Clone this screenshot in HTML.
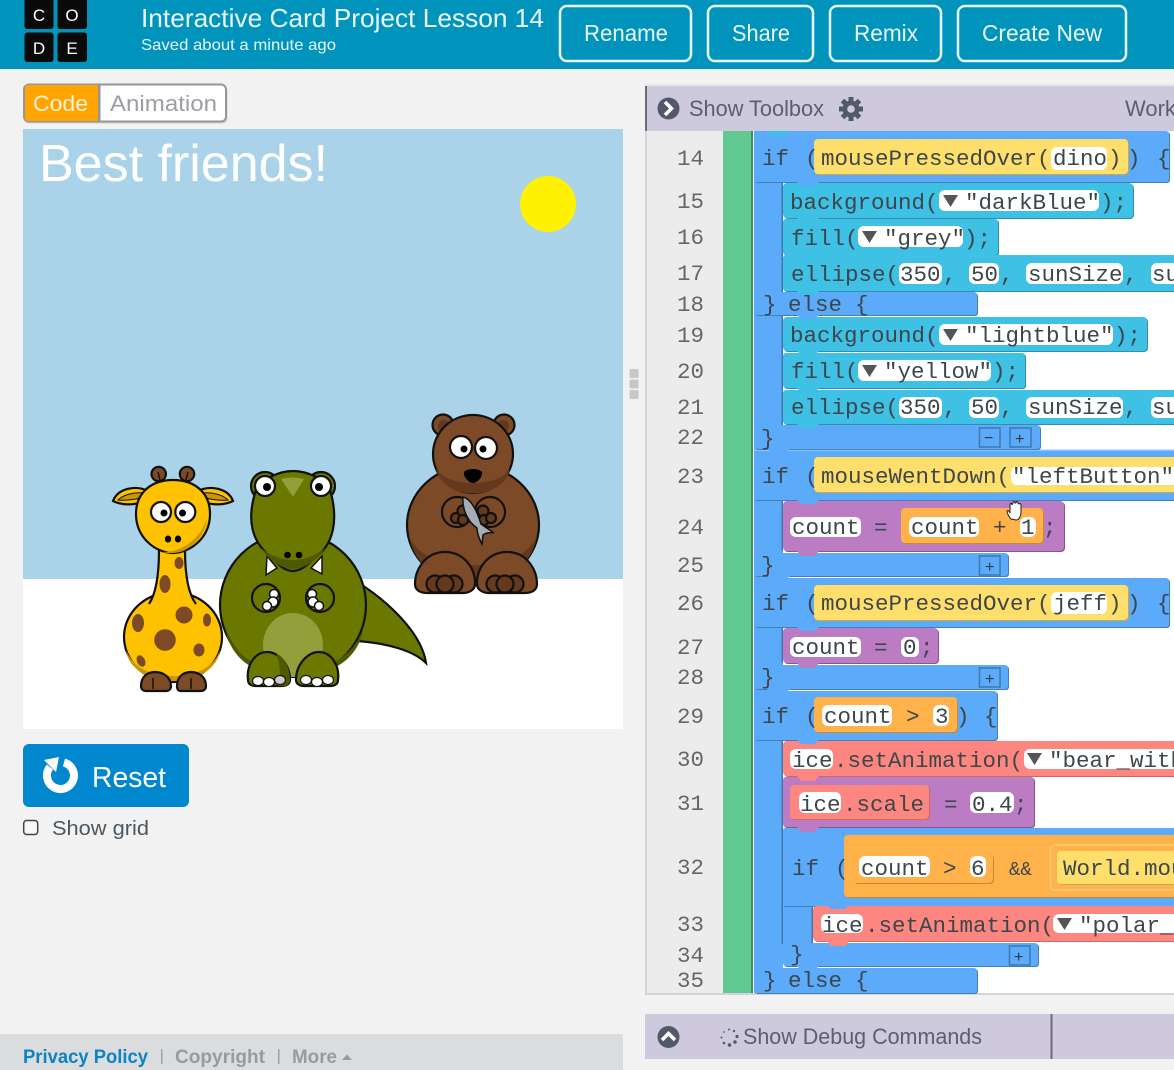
<!DOCTYPE html>
<html><head><meta charset="utf-8"><title>Interactive Card Project Lesson 14</title>
<style>
html,body{margin:0;padding:0;width:1174px;height:1070px;overflow:hidden;background:#f2f2f2}
svg{display:block}
text{font-family:"Liberation Sans",sans-serif}
.m text,text.m{font-family:"Liberation Mono",monospace;font-size:22.5px;fill:#3d474b}
.n text{font-family:"Liberation Mono",monospace;font-size:22.5px;fill:#666}
.b{fill:#5caafa;filter:drop-shadow(1.5px 1.5px 0 #467fb4)}
.c{fill:#3fc0e5;filter:drop-shadow(1.5px 1.5px 0 #338fb0)}
.p{fill:#bb7cc4;filter:drop-shadow(1.5px 1.5px 0 #84588c)}
.r{fill:#fd8680;filter:drop-shadow(1.5px 1.5px 0 #c86a66)}
.o{fill:#ffb24a;filter:drop-shadow(1.5px 1.5px 0 #c48a38)}
.y{fill:#ffdf6b;filter:drop-shadow(1.5px 1.5px 0 #c9a84e)}
.w{fill:#fff}
.k{stroke:#111;stroke-width:2.2}
.bx{fill:#5caafa;stroke:#3f78ad;stroke-width:1.5}
</style></head><body>
<svg width="1174" height="1070" viewBox="0 0 1174 1070" xmlns="http://www.w3.org/2000/svg">
<rect width="1174" height="1070" fill="#f2f2f2"/>
<!-- header -->
<rect width="1174" height="69" fill="#0094bc"/>
<g fill="#0a0a0a"><rect x="24.5" y="-3" width="29" height="32" rx="3"/><rect x="57.5" y="-3" width="29.5" height="32" rx="3"/><rect x="24.5" y="32.5" width="29" height="29.5" rx="3"/><rect x="57.5" y="32.500" width="29.500" height="29.500" rx="3"/></g>
<g fill="#fff" font-size="17" text-anchor="middle"><text x="39" y="21">C</text><text x="72" y="21">O</text><text x="39" y="54">D</text><text x="72" y="54">E</text></g>
<text x="141" y="27" font-size="26" fill="#e8f6fa" textLength="403" lengthAdjust="spacingAndGlyphs">Interactive Card Project Lesson 14</text>
<text x="141" y="50" font-size="16" fill="#e8f6fa" textLength="195" lengthAdjust="spacingAndGlyphs">Saved about a minute ago</text>
<g fill="none" stroke="#e8f6fa" stroke-width="2.5"><rect x="560" y="6" width="131" height="55" rx="7"/><rect x="708" y="6" width="105" height="55" rx="7"/><rect x="830" y="6" width="111" height="55" rx="7"/><rect x="958" y="6" width="168" height="55" rx="7"/></g>
<g fill="#e8f6fa" font-size="23"><text x="584" y="41" textLength="84" lengthAdjust="spacingAndGlyphs">Rename</text><text x="732" y="41" textLength="58" lengthAdjust="spacingAndGlyphs">Share</text><text x="854" y="41" textLength="64" lengthAdjust="spacingAndGlyphs">Remix</text><text x="982" y="41" textLength="120" lengthAdjust="spacingAndGlyphs">Create New</text></g>
<!-- toggle -->
<rect x="23.5" y="85.5" width="204" height="38" rx="5" fill="#b9bbbd" opacity=".6"/>
<rect x="24" y="84.5" width="202" height="37" rx="5" fill="#fff" stroke="#92979c" stroke-width="2"/>
<path d="M25 88a3 3 0 0 1 3-3h70v36H28a3 3 0 0 1-3-3z" fill="#ffa400"/>
<rect x="98" y="85" width="2.5" height="36" fill="#92979c"/>
<text x="33" y="111" font-size="22" fill="#fff2d8" textLength="55" lengthAdjust="spacingAndGlyphs">Code</text>
<text x="110" y="111" font-size="22" fill="#9a9ea3" textLength="107" lengthAdjust="spacingAndGlyphs">Animation</text>
<!-- stage -->
<rect x="23" y="129" width="600" height="450" fill="#aad3e9"/>
<rect x="23" y="579" width="600" height="150" fill="#fff"/>
<circle cx="548" cy="204" r="28" fill="#fff200"/>
<text x="39" y="181" font-size="52" fill="#fff" textLength="289" lengthAdjust="spacingAndGlyphs">Best friends!</text>

<!-- bear -->
<g class="k">
<circle cx="443" cy="425" r="10.5" fill="#7d4a28"/><circle cx="504" cy="425" r="10.5" fill="#7d4a28"/>
<circle cx="444" cy="426" r="6" fill="#5e3a22" stroke="none"/><circle cx="503" cy="426" r="6" fill="#5e3a22" stroke="none"/>
<ellipse cx="473" cy="525" rx="66" ry="60" fill="#7d4a28"/>
<path d="M409 535c8 24 40 30 64 30s56-6 64-30c-4 30-32 50-64 50s-60-20-64-50z" fill="#63391d" stroke="none"/>
<ellipse cx="473" cy="454" rx="40" ry="39" fill="#7d4a28"/>
<path d="M436 468c10 20 64 20 74 0c-6 34-68 34-74 0z" fill="#65391d" stroke="none"/>
<circle cx="461" cy="447" r="11" fill="#fff"/><circle cx="486" cy="448" r="11" fill="#fff"/>
<circle cx="457" cy="512" r="15" fill="none"/><circle cx="490" cy="512" r="15" fill="none"/>
<circle cx="456" cy="518" r="5" fill="#65391d"/><circle cx="463" cy="511" r="5.500" fill="#65391d"/><circle cx="463" cy="520" r="5" fill="#65391d"/><circle cx="483" cy="511" r="5.500" fill="#65391d"/><circle cx="484" cy="520" r="5" fill="#65391d"/><circle cx="491" cy="518" r="5" fill="#65391d"/>
<path d="M463 497c8 2 14 14 18 27l13 9c-5-1-8 0-11 2l-1 9c-3-5-5-12-5-16c-9-6-15-18-14-31z" fill="#a6adb6" stroke-width="1.500"/>
<path d="M445 552c20 0 31 18 30 32c0 6-6 9-12 9h-36c-7 0-12-3-12-9c0-14 10-32 30-32zM507 552c-20 0-31 18-30 32c0 6 6 9 12 9h36c7 0 12-3 12-9c0-14-10-32-30-32z" fill="#7d4a28"/>
<g fill="#65391d"><circle cx="435" cy="584" r="8.500"/><circle cx="454" cy="584" r="8.500"/><circle cx="445" cy="584" r="8.500"/><circle cx="495" cy="584" r="8.500"/><circle cx="515" cy="584" r="8.500"/><circle cx="505" cy="584" r="8.500"/></g>
</g>
<circle cx="464" cy="449" r="3.500" fill="#000"/><circle cx="483" cy="449" r="3.500" fill="#000"/>
<path d="M464 472c4-4 14-4 18 0c1 5-5 11-9 11s-10-6-9-11z" fill="#000"/>

<!-- dino -->
<g class="k">
<path d="M362 585c30 20 60 50 64 78c-12-12-38-20-70-22z" fill="#6a7800"/>
<ellipse cx="293" cy="605" rx="73" ry="72" fill="#6a7800"/>
<path d="M225 630c12 30 40 42 68 42s58-12 70-42c-6 32-34 46-70 46s-60-14-68-46z" fill="#4f5a00" stroke="none"/>
<ellipse cx="293" cy="645" rx="30" ry="32" fill="#92a03c" stroke="none"/>
<path d="M267 556l-1 19l11-7zM322 556l0 18l-11-6z" fill="#fff" stroke-width="1.500"/>
<circle cx="266" cy="598" r="14" fill="none"/><circle cx="320" cy="598" r="14" fill="none"/>
<g fill="#fff" stroke-width="1.500"><circle cx="274" cy="594" r="4.500"/><circle cx="273" cy="602" r="5"/><circle cx="267" cy="606" r="4.500"/><circle cx="312" cy="594" r="4.500"/><circle cx="313" cy="602" r="5"/><circle cx="319" cy="606" r="4.500"/></g>
<path d="M248 680c-2-16 8-28 19-28s23 12 23 28c0 4-4 6-8 6h-26c-5 0-8-2-8-6zM338 680c2-16-8-28-19-28s-23 12-23 28c0 4 4 6 8 6h26c5 0 8-2 8-6z" fill="#6a7800"/>
<path d="M276 653c8 4 14 14 14 27c0 3-2 5-5 6h-7c3-12 2-24-2-33z" fill="#4f5a00" stroke="none"/>
<g fill="#fff" stroke-width="1.200"><ellipse cx="258" cy="681" rx="5.500" ry="4.500"/><ellipse cx="269" cy="682" rx="5.500" ry="4.500"/><ellipse cx="280" cy="680" rx="5.500" ry="4.500" fill="#ccc"/><ellipse cx="306" cy="680" rx="5.500" ry="4.500"/><ellipse cx="317" cy="682" rx="5.500" ry="4.500"/><ellipse cx="328" cy="680" rx="5.500" ry="4.500"/></g>
<circle cx="265" cy="486" r="14" fill="#6a7800"/><circle cx="321" cy="486" r="14" fill="#6a7800"/>
<path d="M256 490c-10 30-4 52 14 66c8 8 14 15 23 15s16-8 24-15c16-12 22-36 13-66c-4-10-22-19-37-19s-32 9-37 19z" fill="#6a7800"/>
<path d="M261 548c10 8 22 12 32 12s22-4 32-12c-7 12-21 21-32 21s-25-9-32-21z" fill="#4f5a00" stroke="none"/>
<circle cx="265" cy="486" r="10" fill="#fff"/><circle cx="321" cy="486" r="10" fill="#fff"/>
</g>
<path d="M281 479c8-2 15-2 23 0l-11 18z" fill="#92a03c"/>
<circle cx="267" cy="487" r="4" fill="#000"/><circle cx="319" cy="487" r="4" fill="#000"/>
<circle cx="287.500" cy="555" r="3.300" fill="#000"/><circle cx="299" cy="555" r="3.300" fill="#000"/>

<!-- giraffe -->
<g class="k">
<ellipse cx="173" cy="637" rx="49" ry="45" fill="#ffc200"/>
<path d="M126 650c8 20 28 26 47 26s40-6 47-26c-2 18-22 31-47 31s-45-13-47-31z" fill="#c99700" stroke="none"/>
<path d="M149 606c8-12 10-36 10-56h26c0 20 2 44 11 56z" fill="#ffc200" stroke="none"/>
<path d="M159 550c0 20-2 42-10 54M185 550c0 20 2 42 11 54" fill="none"/>
<path d="M148 491c-12-6-30-3-35 10c12 6 29 3 36-2zM198 491c12-6 30-3 35 10c-12 6-29 3-36-2z" fill="#ffc200"/>
<path d="M143 493c-10-1-20 2-25 7c8 1 20-1 25-3zM203 493c10-1 20 2 25 7c-8 1-20-1-25-3z" fill="#c99700" stroke-width="1"/>
<circle cx="158.700" cy="474" r="7.200" fill="#7d4a26"/><circle cx="187" cy="474" r="7.200" fill="#7d4a26"/>
<path d="M136 514c0-22 16-34 37-34s37 12 37 34c0 24-20 39-37 39s-37-15-37-39z" fill="#ffc200"/>
<path d="M163 552c20 0 38-14 44-34c-1 18-18 35-34 35c-4 0-7 0-10-1z" fill="#c99700" stroke="none"/>
<circle cx="161" cy="512" r="10" fill="#fff"/><circle cx="185.300" cy="512" r="10" fill="#fff"/>
<path d="M160 480l-2-8M186 480l2-8" fill="none" stroke-width="1.500"/>
<g fill="#7d4a26" stroke="none"><ellipse cx="179" cy="563" rx="4.500" ry="6"/><ellipse cx="165" cy="584" rx="5.500" ry="9"/><circle cx="184" cy="615" r="8.500"/><ellipse cx="138" cy="623" rx="6" ry="9"/><ellipse cx="207" cy="620" rx="4" ry="6.500"/><circle cx="165" cy="640" r="10.800"/><ellipse cx="199" cy="650" rx="5.500" ry="6.500"/><ellipse cx="141" cy="661" rx="4" ry="6" transform="rotate(-25 141 661)"/></g>
<path d="M141 686c0-9 6-14 14-14s16 5 16 14c0 3-2 5-5 5h-20c-3 0-5-2-5-5zM177 686c0-9 6-14 14-14s15 5 15 14c0 3-2 5-5 5h-20c-3 0-4-2-4-5z" fill="#7d4a26"/>
<path d="M153 678v11M191 678v11" fill="none" stroke-width="1.500"/>
</g>
<circle cx="164" cy="513" r="3.500" fill="#000"/><circle cx="182.500" cy="513" r="3.500" fill="#000"/>
<ellipse cx="168" cy="539" rx="3.200" ry="3.500" fill="#000"/><ellipse cx="178" cy="539" rx="3.200" ry="3.500" fill="#000"/>

<!-- reset / grid -->
<rect x="23" y="744" width="166" height="63" rx="6" fill="#0087cd"/>
<path d="M64 762.500A13.500 13.500 0 1 1 50 767" fill="none" stroke="#fff" stroke-width="8"/>
<path d="M44 760l15-3-3 15z" fill="#fff"/>
<text x="92" y="787" font-size="29" fill="#fff" textLength="74" lengthAdjust="spacingAndGlyphs">Reset</text>
<rect x="23.700" y="820.500" width="14" height="14" rx="3" fill="#f7f7f7" stroke="#444" stroke-width="1.500"/>
<text x="52" y="835" font-size="20" fill="#4d575f" textLength="97" lengthAdjust="spacingAndGlyphs">Show grid</text>
<!-- footer -->
<rect y="1034" width="623" height="36" fill="#dbdcdd"/>
<text x="23" y="1063" font-size="19" font-weight="bold" fill="#0e83c1" textLength="125" lengthAdjust="spacingAndGlyphs">Privacy Policy</text>
<rect x="161" y="1049" width="1.500" height="15" fill="#9da3a8"/>
<text x="175" y="1063" font-size="19" font-weight="bold" fill="#949ca2" textLength="90" lengthAdjust="spacingAndGlyphs">Copyright</text>
<rect x="278" y="1049" width="1.500" height="15" fill="#9da3a8"/>
<text x="292" y="1063" font-size="19" font-weight="bold" fill="#949ca2" textLength="45" lengthAdjust="spacingAndGlyphs">More</text>
<path d="M342 1060l5-5.500 5 5.500z" fill="#949ca2"/>
<!-- resize -->
<g fill="#c5c7c9"><rect x="629.500" y="369" width="9" height="9" rx="1.500"/><rect x="629.500" y="379.500" width="9" height="9" rx="1.500"/><rect x="629.500" y="390" width="9" height="9" rx="1.500"/></g>

<!-- workspace -->
<rect x="645" y="84" width="529" height="2" fill="#e6e6e6"/>
<rect x="645" y="131" width="529" height="864" fill="#fff"/>
<rect x="645" y="131" width="2" height="864" fill="#d6d6d6"/>
<rect x="647" y="131" width="76" height="862" fill="#ececec"/>
<rect x="723" y="131" width="28" height="862" fill="#62c892"/>
<rect x="751" y="131" width="2" height="862" fill="#3f8f6a"/>
<rect x="645" y="993" width="529" height="2" fill="#d4d4d4"/>
<rect x="645" y="86" width="529" height="45" fill="#cfc9de"/>
<rect x="645" y="86" width="2" height="45" fill="#6c6c78"/>
<circle cx="668.500" cy="108.500" r="11" fill="#51596a"/>
<path d="M665 102l6.500 6.500-6.500 6.500" fill="none" stroke="#fff" stroke-width="3.500"/>
<text x="689" y="116" font-size="22" fill="#5a5f6e" textLength="135" lengthAdjust="spacingAndGlyphs">Show Toolbox</text>
<g transform="translate(851 109)" fill="#51596a"><circle r="8.500"/><g stroke="#51596a" stroke-width="5"><path d="M0-12V12M-12 0H12M-8.500-8.500L8.500 8.500M-8.500 8.500L8.500-8.500"/></g><circle r="3.800" fill="#cfc9de"/></g>
<text x="1125" y="116" font-size="22" fill="#5a5f6e">Workspace</text>

<!-- spines -->
<rect x="754" y="131" width="29" height="862" fill="#5caafa"/>
<rect x="783" y="905" width="30" height="40" fill="#5caafa"/>
<rect x="811.500" y="906" width="1.500" height="37" fill="#3f78ad"/>
<rect x="781.500" y="183" width="1.500" height="242" fill="#3f78ad"/>
<rect x="781.500" y="501" width="1.500" height="50" fill="#3f78ad"/>
<rect x="781.500" y="628" width="1.500" height="35" fill="#3f78ad"/>
<rect x="781.500" y="741" width="1.500" height="203" fill="#3f78ad"/>
<rect x="754" y="449.500" width="420" height="1.500" fill="#8ec5fc"/>

<!-- blocks -->
<rect class="b" x="754" y="131" width="415" height="51" rx="3"/>
<path d="M768 131h22l-4 5h-14z" fill="#3fc0e5"/>
<rect class="y" x="814" y="139" width="314" height="35" rx="4"/>
<rect class="c" x="783" y="183" width="350" height="35" rx="4"/>
<rect class="c" x="783" y="219" width="215" height="36" rx="3"/>
<rect class="c" x="783" y="255" width="395" height="36" rx="3"/>
<rect class="b" x="754" y="292" width="223" height="23" rx="3"/>
<rect class="c" x="783" y="317" width="364" height="34" rx="4"/>
<rect class="c" x="783" y="353" width="242" height="35" rx="3"/>
<rect class="c" x="783" y="390" width="395" height="34" rx="3"/>
<rect class="b" x="754" y="425" width="286" height="24" rx="3"/>
<rect class="b" x="754" y="451" width="425" height="49" rx="2"/>
<rect class="y" x="814" y="457" width="365" height="35" rx="4"/>
<rect class="p" x="783" y="501" width="281" height="50" rx="4"/>
<rect class="o" x="901" y="508" width="142" height="35" rx="4"/>
<rect class="b" x="754" y="553" width="254" height="23" rx="3"/>
<rect class="b" x="754" y="578" width="415" height="49" rx="3"/>
<rect class="y" x="814" y="585" width="314" height="35" rx="4"/>
<rect class="p" x="783" y="628" width="155" height="35" rx="4"/>
<rect class="b" x="754" y="665" width="254" height="24" rx="3"/>
<rect class="b" x="754" y="691" width="243" height="49" rx="3"/>
<rect class="o" x="814" y="697" width="143" height="35" rx="4"/>
<rect class="r" x="783" y="741" width="395" height="35" rx="4"/>
<rect class="p" x="783" y="777" width="251" height="50" rx="3"/>
<rect class="r" x="790" y="785" width="139" height="34" rx="4"/>
<rect class="b" x="783" y="828" width="395" height="78" rx="2"/>
<rect class="o" x="844" y="835" width="334" height="62" rx="4"/>
<rect class="o" x="853" y="854" width="140" height="29" rx="4"/>
<rect x="1050.500" y="845" width="130" height="45" rx="4" fill="#ffb24a" stroke="#ffc97d" stroke-width="1.500"/>
<rect class="y" x="1057" y="851" width="125" height="33" rx="4"/>
<rect class="r" x="813" y="906" width="365" height="35" rx="4"/>
<rect class="b" x="783" y="943" width="255" height="23" rx="3"/>
<rect class="b" x="754" y="968" width="223" height="25" rx="3"/>

<!-- connector tabs -->
<g fill="#3fc0e5"><path d="M797 218h22l-4 4h-14zM797 254h22l-4 4h-14zM797 291h22l-4 4h-14zM797 351h22l-4 4h-14zM797 388h22l-4 4h-14zM797 424h22l-4 4h-14z"/></g>
<g fill="#5caafa"><path d="M768 449h22l-4 4h-14zM768 576h22l-4 4h-14zM768 689h22l-4 4h-14zM797 182h22l-4 4h-14zM797 315h22l-4 4h-14zM797 500h22l-4 4h-14zM797 627h22l-4 4h-14zM797 740h22l-4 4h-14zM827 905h22l-4 4h-14zM797 966h22l-4 4h-14z"/></g>
<g fill="#bb7cc4"><path d="M797 551h22l-4 5h-14zM797 663h22l-4 5h-14zM797 827h22l-4 5h-14z"/></g>
<g fill="#fd8680"><path d="M797 776h22l-4 5h-14zM827 941h22l-4 5h-14z"/></g>

<!-- toggle boxes -->
<rect class="bx" x="979.500" y="428" width="20.500" height="19"/><rect class="bx" x="1010" y="428" width="21" height="19"/>
<rect class="bx" x="979.500" y="556" width="20.500" height="19"/>
<rect class="bx" x="979.500" y="668" width="20.500" height="19"/>
<rect class="bx" x="1009.500" y="946" width="20.500" height="19"/>
<g fill="#2f3a3f" font-size="16"><text x="984" y="443">−</text><text x="1015" y="444">+</text><text x="985" y="572">+</text><text x="985" y="684">+</text><text x="1014" y="962">+</text></g>

<!-- pills -->
<g class="w">
<rect x="1051" y="147" width="56" height="23" rx="6"/>
<rect x="939" y="190" width="160" height="21" rx="6"/>
<rect x="858" y="226" width="105" height="21" rx="6"/>
<rect x="899" y="263" width="43" height="21" rx="6"/><rect x="969" y="263" width="30" height="21" rx="6"/><rect x="1026" y="263" width="97" height="21" rx="6"/><rect x="1151" y="263" width="30" height="21" rx="6"/>
<rect x="939" y="324" width="174" height="21" rx="6"/>
<rect x="858" y="360" width="133" height="21" rx="6"/>
<rect x="899" y="397" width="43" height="21" rx="6"/><rect x="969" y="397" width="30" height="21" rx="6"/><rect x="1026" y="397" width="97" height="21" rx="6"/><rect x="1151" y="397" width="30" height="21" rx="6"/>
<rect x="1011" y="467" width="170" height="18" rx="6"/>
<rect x="790" y="517" width="71" height="20" rx="6"/><rect x="909" y="517" width="70" height="20" rx="6"/><rect x="1020" y="517" width="16" height="20" rx="6"/>
<rect x="1051" y="592" width="56" height="22" rx="6"/>
<rect x="790" y="637" width="71" height="20" rx="6"/><rect x="901" y="637" width="18" height="20" rx="6"/>
<rect x="822" y="705" width="70" height="21" rx="6"/><rect x="933" y="705" width="16" height="21" rx="6"/>
<rect x="790" y="749" width="43" height="20" rx="6"/><rect x="1024" y="749" width="160" height="20" rx="6"/>
<rect x="799" y="792" width="42" height="21" rx="6"/><rect x="970" y="792" width="44" height="21" rx="6"/>
<rect x="859" y="856" width="71" height="21" rx="6"/><rect x="970" y="856" width="16" height="21" rx="6"/>
<rect x="821" y="914" width="42" height="19" rx="6"/><rect x="1053" y="914" width="130" height="19" rx="6"/>
</g>
<g fill="#555"><path d="M943 195h15l-7.500 12zM862 231h15l-7.500 12zM943 329h15l-7.500 12zM862 365h15l-7.500 12zM1027 753h15l-7.500 12zM1057 918h15l-7.500 12z"/></g>

<!-- line numbers -->
<g class="n">
<text x="677" y="165">14</text><text x="677" y="208">15</text><text x="677" y="244">16</text><text x="677" y="280">17</text><text x="677" y="311">18</text><text x="677" y="342">19</text><text x="677" y="378">20</text><text x="677" y="414">21</text><text x="677" y="444">22</text><text x="677" y="483">23</text><text x="677" y="534">24</text><text x="677" y="572">25</text><text x="677" y="610">26</text><text x="677" y="654">27</text><text x="677" y="684">28</text><text x="677" y="723">29</text><text x="677" y="766">30</text><text x="677" y="810">31</text><text x="677" y="874">32</text><text x="677" y="931">33</text><text x="677" y="962">34</text><text x="677" y="987">35</text>
</g>

<!-- code -->
<g class="m">
<text x="762" y="165">if</text><text x="805" y="165">(</text><text x="821" y="165">mousePressedOver(</text><text x="1053" y="165">dino</text><text x="1108" y="165">)</text><text x="1127" y="165">)</text><text x="1157" y="165">{</text>
<text x="790" y="209">background(</text><text x="965" y="209">"darkBlue"</text><text x="1100" y="209">);</text>
<text x="791" y="245">fill(</text><text x="884" y="245">"grey"</text><text x="964" y="245">);</text>
<text x="791" y="281">ellipse(</text><text x="900" y="281">350</text><text x="943" y="281">,</text><text x="971" y="281">50</text><text x="1000" y="281">,</text><text x="1028" y="281">sunSize</text><text x="1124" y="281">,</text><text x="1152" y="281">su</text>
<text x="763" y="311">}</text><text x="788" y="311">else</text><text x="855" y="311">{</text>
<text x="790" y="342">background(</text><text x="965" y="342">"lightblue"</text><text x="1114" y="342">);</text>
<text x="791" y="378">fill(</text><text x="884" y="378">"yellow"</text><text x="992" y="378">);</text>
<text x="791" y="414">ellipse(</text><text x="900" y="414">350</text><text x="943" y="414">,</text><text x="971" y="414">50</text><text x="1000" y="414">,</text><text x="1028" y="414">sunSize</text><text x="1124" y="414">,</text><text x="1152" y="414">su</text>
<text x="761" y="445">}</text>
<text x="762" y="483">if</text><text x="805" y="483">(</text><text x="821" y="483">mouseWentDown(</text><text x="1012" y="483">"leftButton"</text>
<text x="792" y="534">count</text><text x="874" y="534">=</text><text x="911" y="534">count</text><text x="993" y="534">+</text><text x="1021" y="534">1</text><text x="1043" y="534">;</text>
<text x="761" y="572">}</text>
<text x="762" y="610">if</text><text x="805" y="610">(</text><text x="821" y="610">mousePressedOver(</text><text x="1053" y="610">jeff</text><text x="1108" y="610">)</text><text x="1127" y="610">)</text><text x="1157" y="610">{</text>
<text x="792" y="654">count</text><text x="874" y="654">=</text><text x="903" y="654">0</text><text x="920" y="654">;</text>
<text x="761" y="684">}</text>
<text x="762" y="723">if</text><text x="805" y="723">(</text><text x="824" y="723">count</text><text x="906" y="723">&gt;</text><text x="935" y="723">3</text><text x="956" y="723">)</text><text x="984" y="723">{</text>
<text x="792" y="767">ice</text><text x="834" y="767">.setAnimation(</text><text x="1049" y="767">"bear_with</text>
<text x="800" y="811">ice</text><text x="843" y="811">.scale</text><text x="944" y="811">=</text><text x="972" y="811">0.4</text><text x="1014" y="811">;</text>
<text x="792" y="875">if</text><text x="835" y="875">(</text><text x="861" y="875">count</text><text x="943" y="875">&gt;</text><text x="971" y="875">6</text><text x="1009" y="875" style="font-size:19px">&amp;&amp;</text><text x="1063" y="875">World.mou</text>
<text x="822" y="932">ice</text><text x="865" y="932">.setAnimation(</text><text x="1079" y="932">"polar_l</text>
<text x="790" y="961">}</text>
<text x="763" y="987">}</text><text x="788" y="987">else</text><text x="855" y="987">{</text>
</g>

<!-- hand cursor -->
<g transform="translate(1016 512)"><path d="M-5 7c-2-2-4-6-4-8 1-1 2 0 3 2l0-8c0-2 2-2 2 0l1-2c0-2 2-2 2 0l1 0c0-2 2-2 2 0l1 1c1-1 2 0 2 1v7c0 4-2 8-5 8z" fill="#fff" stroke="#222" stroke-width="1"/></g>

<!-- debug bar -->
<rect x="645" y="1014" width="529" height="45" fill="#cfc9de"/>
<rect x="1050.500" y="1014" width="2" height="45" fill="#6c6c78"/>
<circle cx="668.500" cy="1037" r="11" fill="#51596a"/>
<path d="M662 1040l6.500-6.500 6.500 6.500" fill="none" stroke="#fff" stroke-width="3.500"/>
<g fill="#51596a"><circle cx="729" cy="1029.500" r="1"/><circle cx="734" cy="1031" r="1.200"/><circle cx="737" cy="1036.500" r="1.600"/><circle cx="735" cy="1042" r="1.800"/><circle cx="729.500" cy="1045" r="1.800"/><circle cx="724" cy="1043" r="1.300"/><circle cx="721.500" cy="1037.500" r="1"/><circle cx="724" cy="1032" r=".9"/></g>
<text x="743" y="1044" font-size="22" fill="#5a5f6e" textLength="239" lengthAdjust="spacingAndGlyphs">Show Debug Commands</text>
</svg>
</body></html>
